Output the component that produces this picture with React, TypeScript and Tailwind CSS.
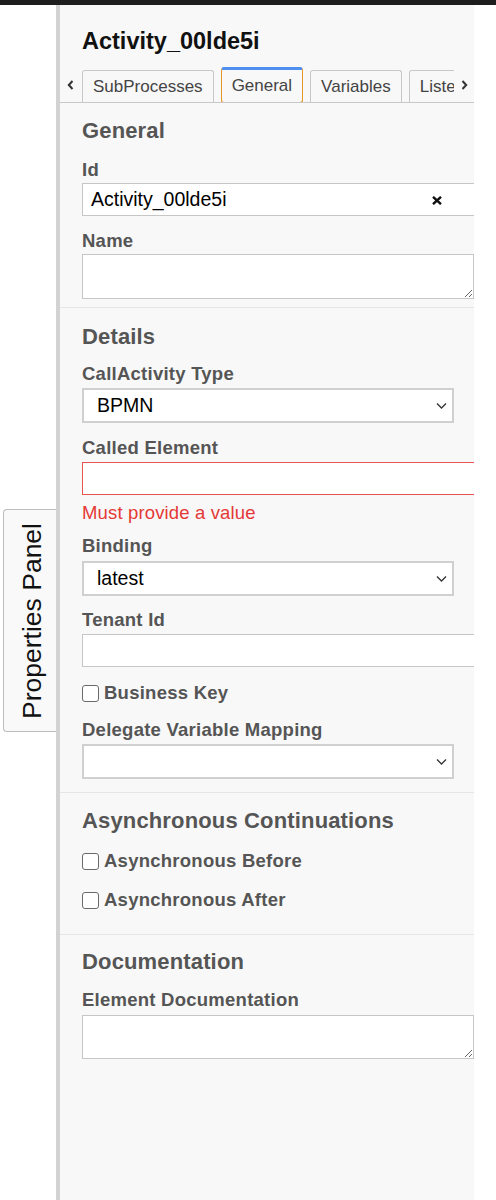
import React from "react";

const sans = "font-['Liberation_Sans',Arial,sans-serif]";

function Label({ children, className = "" }: { children: React.ReactNode; className?: string }) {
  return (
    <div className={`text-[18.5px] leading-[22px] font-bold tracking-[0.25px] text-[#555] ${className}`}>{children}</div>
  );
}

function Heading({ children, className = "" }: { children: React.ReactNode; className?: string }) {
  return (
    <div className={`text-[22px] leading-[26px] font-bold tracking-[0.15px] text-[#555] ${className}`}>{children}</div>
  );
}

function Chevron() {
  return (
    <svg width="11" height="7" viewBox="0 0 11 7" className="absolute right-[7px] top-1/2 -translate-y-1/2 pointer-events-none">
      <path d="M1 1l4.5 4.5L10 1" fill="none" stroke="#333" strokeWidth="1.3" />
    </svg>
  );
}

function Select({ value }: { value: string }) {
  return (
    <div className="relative w-[372px] h-[35px]">
      <select
        defaultValue={value}
        className="appearance-none w-full h-full border-2 border-[#d0d0d0] bg-white pl-[13px] text-[19.5px] text-black outline-none"
      >
        <option value={value}>{value}</option>
      </select>
      <Chevron />
    </div>
  );
}

function Check({ label, className = "" }: { label: string; className?: string }) {
  return (
    <div className={`flex items-center h-[22px] gap-[5px] ${className}`}>
      <span className="w-[17px] h-[17px] rounded-[3px] border-[1.5px] border-[#6a6a6a] bg-white shrink-0" />
      <span className="text-[18.5px] leading-[22px] font-bold tracking-[0.25px] text-[#555]">{label}</span>
    </div>
  );
}

function Tab({ label, active = false }: { label: string; active?: boolean }) {
  if (active) {
    return (
      <div className="relative z-10 shrink-0 h-[36px] mb-[-1px] px-[10px] flex items-center border border-[#e8952a] border-t-[3px] border-t-[#4f8ff0] rounded-[3px] bg-[#f8f8f8] text-[17px] text-[#444]">
        {label}
      </div>
    );
  }
  return (
    <div className="shrink-0 h-[32px] px-[10px] flex items-center border border-b-0 border-[#c8c8c8] rounded-t-[3px] bg-[#f8f8f8] text-[17px] text-[#444]">
      {label}
    </div>
  );
}

export default function App() {
  return (
    <div className={`${sans} w-[496px] min-h-[1200px] flex flex-col bg-white`}>
      <div className="h-[5px] bg-[#1d1d1d] shrink-0" />
      <div className="flex flex-1">
        <div className="w-[56px] shrink-0 pt-[504px] pl-[3px]">
          <div className="w-[53px] h-[223px] border border-r-0 border-[#bdbdbd] rounded-l-[4px] bg-[#f9f9f9] flex items-center justify-center pl-[4px]">
            <span className="[writing-mode:vertical-rl] rotate-180 text-[26.5px] leading-[30px] text-[#111] whitespace-nowrap">
              Properties Panel
            </span>
          </div>
        </div>

        <div className="w-[418px] shrink-0 border-l-4 border-[#d2d2d2] bg-[#f8f8f8] overflow-hidden">
          <div className="px-[22px] mt-[22px] text-[23.5px] leading-[28px] font-bold text-[#111]">Activity_00lde5i</div>

          {/* tabs */}
          <div className="mt-[12px] h-[36px] flex items-end border-b border-[#c8c8c8]">
            <div className="w-[22px] h-[35px] flex items-center justify-center pr-[2px] shrink-0">
              <svg width="7" height="10" viewBox="0 0 7 10">
                <path d="M5.5 1L1.8 5l3.7 4" fill="none" stroke="#333" strokeWidth="2" />
              </svg>
            </div>
            <div className="w-[372px] flex items-end gap-[7px] overflow-hidden">
              <Tab label="SubProcesses" />
              <Tab label="General" active />
              <Tab label="Variables" />
              <Tab label="Listeners" />
            </div>
            <div className="w-[20px] h-[35px] flex items-center justify-center shrink-0">
              <svg width="7" height="10" viewBox="0 0 7 10">
                <path d="M1.5 1l3.7 4-3.7 4" fill="none" stroke="#333" strokeWidth="2" />
              </svg>
            </div>
          </div>

          {/* General */}
          <div className="px-[22px] pb-[8px] border-b border-[#e6e6e6]">
            <Heading className="mt-[15px]">General</Heading>
            <Label className="mt-[15px] mb-[2px]">Id</Label>
            <div className="relative w-[400px] h-[33px] border border-[#c6c6c6] bg-white flex items-center pl-[8px] text-[19.5px] text-black">
              Activity_00lde5i
              <svg width="10" height="9" viewBox="0 0 10 9" className="absolute left-[349px] top-[12px]">
                <path d="M1 0.8l8 7.4M9 0.8l-8 7.4" stroke="#111" strokeWidth="2.4" />
              </svg>
            </div>
            <Label className="mt-[14px] mb-[2px]">Name</Label>
            <textarea className="block w-[392px] h-[45px] border border-[#c6c6c6] bg-white outline-none" />
          </div>

          {/* Details */}
          <div className="px-[22px] pb-[13px] border-b border-[#e6e6e6]">
            <Heading className="mt-[16px]">Details</Heading>
            <Label className="mt-[13px] mb-[3px]">CallActivity Type</Label>
            <Select value="BPMN" />
            <Label className="mt-[14px] mb-[3px]">Called Element</Label>
            <div className="w-[400px] h-[33px] border border-[#e8544f] bg-white" />
            <div className="mt-[7px] text-[18.5px] leading-[22px] tracking-[0.15px] text-[#e53935]">Must provide a value</div>
            <Label className="mt-[11px] mb-[4px]">Binding</Label>
            <Select value="latest" />
            <Label className="mt-[13px] mb-[3px]">Tenant Id</Label>
            <div className="w-[400px] h-[33px] border border-[#c6c6c6] bg-white" />
            <Check label="Business Key" className="mt-[15px]" />
            <Label className="mt-[15px] mb-[3px]">Delegate Variable Mapping</Label>
            <Select value="" />
          </div>

          {/* Asynchronous Continuations */}
          <div className="px-[22px] pb-[23px] border-b border-[#e6e6e6]">
            <Heading className="mt-[15px]">Asynchronous Continuations</Heading>
            <Check label="Asynchronous Before" className="mt-[16px]" />
            <Check label="Asynchronous After" className="mt-[17px]" />
          </div>

          {/* Documentation */}
          <div className="px-[22px]">
            <Heading className="mt-[14px]">Documentation</Heading>
            <Label className="mt-[14px] mb-[4px]">Element Documentation</Label>
            <textarea className="block w-[392px] h-[44px] border border-[#c6c6c6] bg-white outline-none" />
          </div>
        </div>
        <div className="flex-1 bg-white" />
      </div>
    </div>
  );
}
